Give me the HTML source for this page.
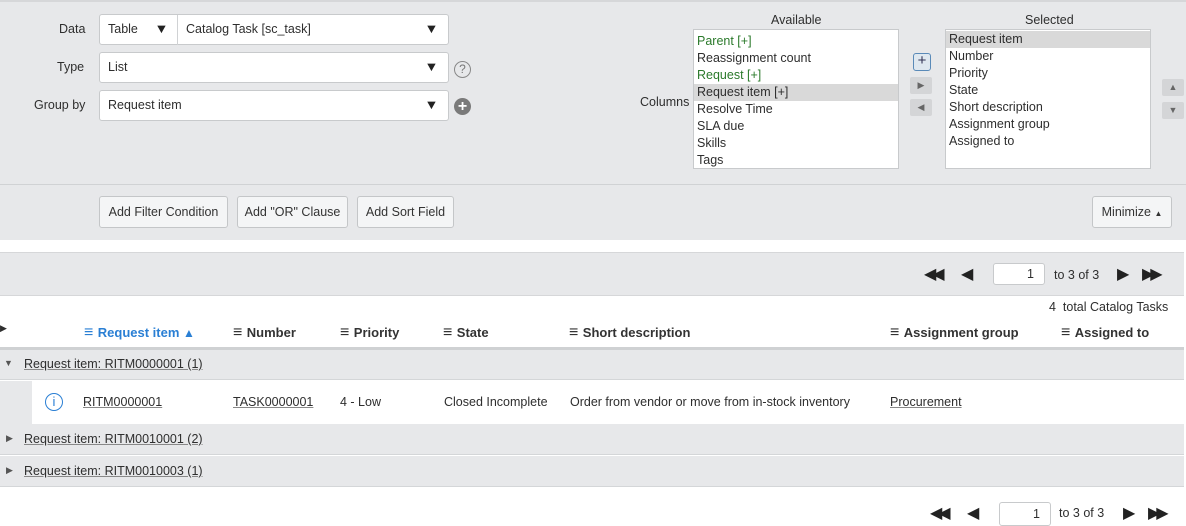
<!DOCTYPE html>
<html><head><style>
*{box-sizing:border-box;margin:0;padding:0}
body{width:1186px;height:520px;background:#fff;font-family:"Liberation Sans",sans-serif;font-size:12.5px;color:#2e2e2e;position:relative;overflow:hidden}
.a{position:absolute;white-space:nowrap}
.box{position:absolute;background:#fff;border:1px solid #c8cacc;border-radius:3px}
.btn{position:absolute;background:#f4f5f6;border:1px solid #c4c6c8;border-radius:3px;text-align:center;line-height:30px;color:#333}
.tri{position:absolute;font-size:13px;color:#222;transform:scaleX(1.1)}
.lst div{height:17px;line-height:17px;padding-left:3px}
.g{color:#2b7a2b}
.h{position:absolute;top:324px;font-weight:bold;color:#333;font-size:13px}
.h:before{content:"≡ ";font-weight:bold;font-size:16px}
.pg{position:absolute;font-size:16px;color:#222}
u{text-decoration:underline;text-decoration-color:#888}
</style></head><body>
<div class="a" style="left:0;top:0;width:1186px;height:240px;background:#e7e8ea;border-top:2px solid #d6d7d9"></div>
<div class="a" style="left:0;top:184px;width:1186px;height:1px;background:#d0d2d4"></div>
<div class="a" style="left:59px;top:22px">Data</div>
<div class="a" style="left:57px;top:60px">Type</div>
<div class="a" style="left:34px;top:98px">Group by</div>
<div class="box" style="left:99px;top:14px;width:350px;height:31px"></div>
<div class="a" style="left:177px;top:15px;width:1px;height:30px;background:#d0d2d4"></div>
<div class="a" style="left:108px;top:22px">Table</div><div class="tri" style="left:155px;top:21px">▼</div>
<div class="a" style="left:186px;top:22px">Catalog Task [sc_task]</div><div class="tri" style="left:425px;top:21px">▼</div>
<div class="box" style="left:99px;top:52px;width:350px;height:31px"></div>
<div class="a" style="left:108px;top:60px">List</div><div class="tri" style="left:425px;top:59px">▼</div>
<div class="box" style="left:99px;top:90px;width:350px;height:31px"></div>
<div class="a" style="left:108px;top:98px">Request item</div><div class="tri" style="left:425px;top:97px">▼</div>
<div class="a" style="left:454px;top:61px;width:17px;height:17px;border:1.5px solid #888;border-radius:50%;text-align:center;line-height:14px;font-size:12px;color:#777">?</div>
<div class="a" style="left:454px;top:98px;width:17px;height:17px;background:#7a7a7a;border-radius:50%;text-align:center;line-height:17px;font-size:16px;color:#fff;font-weight:bold">+</div>
<div class="a" style="left:771px;top:13px">Available</div>
<div class="a" style="left:1025px;top:13px">Selected</div>
<div class="a" style="left:640px;top:95px">Columns</div>
<div class="box lst" style="left:693px;top:29px;width:206px;height:140px;border-radius:0;padding-top:3px">
<div class="g">Parent [+]</div><div>Reassignment count</div><div class="g">Request [+]</div><div style="background:#d9d9d9">Request item [+]</div><div>Resolve Time</div><div>SLA due</div><div>Skills</div><div>Tags</div></div>
<div class="box lst" style="left:945px;top:29px;width:206px;height:140px;border-radius:0;padding-top:1px">
<div style="background:#d9d9d9">Request item</div><div>Number</div><div>Priority</div><div>State</div><div>Short description</div><div>Assignment group</div><div>Assigned to</div></div>
<div class="a" style="left:913px;top:53px;width:18px;height:18px;border:1.5px solid #5a8ab8;border-radius:3px;background:#dfe8f0;text-align:center;line-height:14px;font-size:15px;color:#335">+</div>
<div class="a" style="left:910px;top:77px;width:22px;height:17px;background:#d4d5d7;border-radius:2px;font-size:9px;text-align:center;line-height:17px;color:#666">▶</div>
<div class="a" style="left:910px;top:99px;width:22px;height:17px;background:#d4d5d7;border-radius:2px;font-size:9px;text-align:center;line-height:17px;color:#666">◀</div>
<div class="a" style="left:1162px;top:79px;width:22px;height:17px;background:#d4d5d7;border-radius:2px;font-size:9px;text-align:center;line-height:17px;color:#666">▲</div>
<div class="a" style="left:1162px;top:102px;width:22px;height:17px;background:#d4d5d7;border-radius:2px;font-size:9px;text-align:center;line-height:17px;color:#666">▼</div>
<div class="btn" style="left:99px;top:196px;width:129px;height:32px">Add Filter Condition</div>
<div class="btn" style="left:237px;top:196px;width:111px;height:32px">Add "OR" Clause</div>
<div class="btn" style="left:357px;top:196px;width:97px;height:32px">Add Sort Field</div>
<div class="btn" style="left:1092px;top:196px;width:80px;height:32px">Minimize <span style="font-size:8px">▲</span></div>
<div class="a" style="left:0;top:252px;width:1184px;height:44px;background:#e7e8ea;border-top:1px solid #d6d7d9;border-bottom:1px solid #d6d7d9"></div>
<div class="pg" style="left:924px;top:264px;letter-spacing:-4px">◀◀</div>
<div class="pg" style="left:961px;top:264px">◀</div>
<div class="box" style="left:993px;top:263px;width:52px;height:22px;text-align:right;padding-right:10px;line-height:20px">1</div>
<div class="a" style="left:1054px;top:268px">to 3 of 3</div>
<div class="pg" style="left:1117px;top:264px">▶</div>
<div class="pg" style="left:1142px;top:264px;letter-spacing:-4px">▶▶</div>
<div class="a" style="left:1049px;top:300px">4 &nbsp;total Catalog Tasks</div>
<div class="a" style="left:0;top:323px;font-size:9px">▶</div>
<div class="h" style="left:84px;color:#2a7fd4">Request item <span style="font-size:12px">▲</span></div>
<div class="h" style="left:233px">Number</div>
<div class="h" style="left:340px">Priority</div>
<div class="h" style="left:443px">State</div>
<div class="h" style="left:569px">Short description</div>
<div class="h" style="left:890px">Assignment group</div>
<div class="h" style="left:1061px">Assigned to</div>
<div class="a" style="left:0;top:347px;width:1184px;height:3px;background:#cfd1d3"></div>
<div class="a" style="left:0;top:350px;width:1184px;height:30px;background:#e7e8ea;border-bottom:1px solid #d4d6d8"></div>
<div class="a" style="left:4px;top:358px;font-size:9px;color:#555">▼</div>
<div class="a" style="left:24px;top:357px"><u>Request item: RITM0000001 (1)</u></div>
<div class="a" style="left:0;top:381px;width:32px;height:43px;background:#e7e8ea"></div>
<div class="a" style="left:45px;top:393px;width:18px;height:18px;border:1.5px solid #2a7fd4;border-radius:50%;color:#2a7fd4;text-align:center;line-height:15px;font-size:13px">i</div>
<div class="a" style="left:83px;top:395px"><u>RITM0000001</u></div>
<div class="a" style="left:233px;top:395px"><u>TASK0000001</u></div>
<div class="a" style="left:340px;top:395px">4 - Low</div>
<div class="a" style="left:444px;top:395px">Closed Incomplete</div>
<div class="a" style="left:570px;top:395px">Order from vendor or move from in-stock inventory</div>
<div class="a" style="left:890px;top:395px"><u>Procurement</u></div>
<div class="a" style="left:0;top:424px;width:1184px;height:31px;background:#e7e8ea;border-bottom:1px solid #d4d6d8"></div>
<div class="a" style="left:6px;top:433px;font-size:9px;color:#555">▶</div>
<div class="a" style="left:24px;top:432px"><u>Request item: RITM0010001 (2)</u></div>
<div class="a" style="left:0;top:456px;width:1184px;height:31px;background:#e7e8ea;border-bottom:1px solid #d4d6d8"></div>
<div class="a" style="left:6px;top:465px;font-size:9px;color:#555">▶</div>
<div class="a" style="left:24px;top:464px"><u>Request item: RITM0010003 (1)</u></div>
<div class="pg" style="left:930px;top:503px;letter-spacing:-4px">◀◀</div>
<div class="pg" style="left:967px;top:503px">◀</div>
<div class="box" style="left:999px;top:502px;width:52px;height:24px;text-align:right;padding-right:10px;line-height:22px">1</div>
<div class="a" style="left:1059px;top:506px">to 3 of 3</div>
<div class="pg" style="left:1123px;top:503px">▶</div>
<div class="pg" style="left:1148px;top:503px;letter-spacing:-4px">▶▶</div>
</body></html>
